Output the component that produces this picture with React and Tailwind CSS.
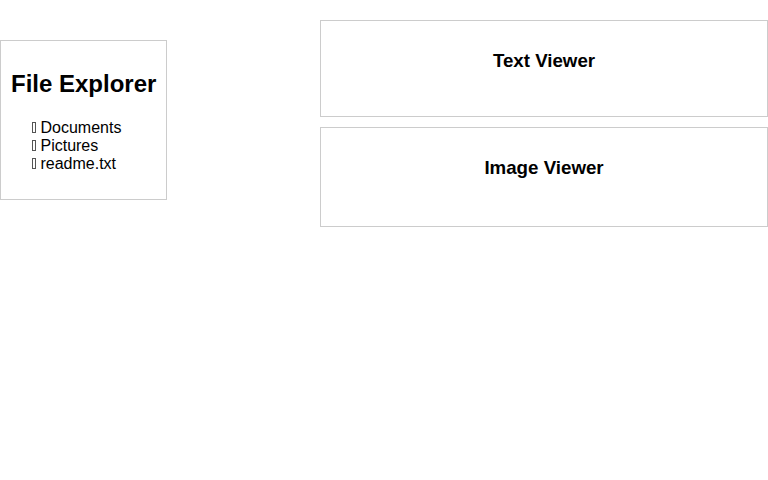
const items = ["Documents", "Pictures", "readme.txt"];

const Panel = ({ title, height }) => (
  <div className={`border border-[#ccc] ${height} flex justify-center pt-[29px]`}>
    <h3 className="text-[18.72px] font-bold leading-[22px] h-fit">{title}</h3>
  </div>
);

// missing-glyph box, as the original font shows it
const Tofu = () => (
  <span className="inline-block w-[4px] h-[11px] ml-[1px] border border-[#555] align-baseline" />
);

export default function App() {
  return (
    <div className="flex items-start w-[768px] h-[480px] bg-white text-black font-['Liberation_Sans',Arial,sans-serif]">
      {/* File Explorer */}
      <div className="mt-[40px] w-[167px] h-[160px] border border-[#ccc] px-[10px] pt-[29px]">
        <h2 className="text-[24px] font-bold leading-[28px] text-center whitespace-nowrap">File Explorer</h2>
        <ul className="mt-[21px] pl-[20px] text-[16px] leading-[18px]">
          {items.map((name) => (
            <li key={name} className="whitespace-nowrap">
              <Tofu /> {name}
            </li>
          ))}
        </ul>
      </div>

      {/* Viewers */}
      <div className="ml-auto mt-[20px] w-[448px] flex flex-col gap-[10px]">
        <Panel title="Text Viewer" height="h-[97px]" />
        <Panel title="Image Viewer" height="h-[100px]" />
      </div>
    </div>
  );
}
